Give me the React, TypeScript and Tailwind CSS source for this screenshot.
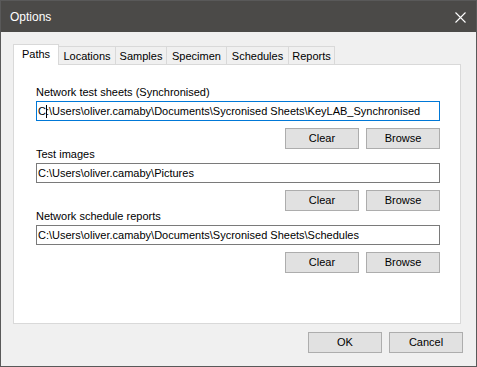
import type { ReactNode } from 'react';

const tabs = [
  { label: 'Paths', w: 'w-[46px]' },
  { label: 'Locations', w: 'w-[57px]' },
  { label: 'Samples', w: 'w-[51px]' },
  { label: 'Specimen', w: 'w-[60px]' },
  { label: 'Schedules', w: 'w-[62px]' },
  { label: 'Reports', w: 'w-[46px]' },
];

function WinButton({ children }: { children: ReactNode }) {
  return (
    <button
      type="button"
      className="flex h-[21px] w-[74px] items-center justify-center border border-[#adadad] bg-[#e1e1e1] text-[11px] leading-[13px] text-black"
    >
      {children}
    </button>
  );
}

function PathField({ label, value, focused, first }: { label: string; value: ReactNode; focused?: boolean; first?: boolean }) {
  return (
    <div className={`flex flex-col ${first ? '' : '-mt-px'}`}>
      <div className="h-[13px] leading-[13px] text-black">{label}</div>
      <div
        className={`mt-[2px] flex h-[20px] w-[404px] items-center border pl-px leading-[13px] whitespace-nowrap text-black ${focused ? 'border-[#0078d7]' : 'border-[#7a7a7a]'}`}
      >
        {value}
      </div>
      <div className="mt-[7px] flex w-[404px] justify-end gap-[7px]">
        <WinButton>Clear</WinButton>
        <WinButton>Browse</WinButton>
      </div>
    </div>
  );
}

export default function App() {
  return (
    <div className="flex h-[367px] w-[477px] flex-col border border-[#595959] bg-[#f0f0f0] font-['Liberation_Sans',Arial,sans-serif] text-[11px]">
      <div className="flex h-[31px] items-center justify-between bg-[#4b4a48] pl-[9px] pr-[10px]">
        <span className="text-[12px] text-white">Options</span>
        <svg width="11" height="11" viewBox="0 0 11 11" className="mt-px">
          <path d="M0.5 0.5 L10.5 10.5 M10.5 0.5 L0.5 10.5" stroke="#ffffff" strokeWidth="1.1" />
        </svg>
      </div>

      <div className="flex flex-col pl-[12px] pt-[12px]">
        <div className="flex h-[20px] items-end">
          {tabs.map((t, i) =>
            i === 0 ? (
              <div
                key={t.label}
                className={`relative z-10 -mb-px flex h-[21px] ${t.w} items-start justify-center border border-b-0 border-[#d9d9d9] bg-white pt-[3px] leading-[13px] text-black`}
              >
                {t.label}
              </div>
            ) : (
              <div
                key={t.label}
                className={`flex h-[18px] ${t.w} items-center justify-center border-t border-r border-[#d9d9d9] bg-[#f0f0f0] pt-px leading-[13px] text-black`}
              >
                {t.label}
              </div>
            )
          )}
        </div>

        <div className="flex h-[260px] w-[448px] flex-col border border-[#d9d9d9] bg-white pl-[22px] pt-[21px]">
          <PathField
            first
            focused
            label="Network test sheets (Synchronised)"
            value={
              <>
                C<span className="-mr-px inline-block h-[13px] w-px bg-black" />
                :\Users\oliver.camaby\Documents\Sycronised Sheets\KeyLAB_Synchronised
              </>
            }
          />
          <PathField label="Test images" value="C:\Users\oliver.camaby\Pictures" />
          <PathField
            label="Network schedule reports"
            value="C:\Users\oliver.camaby\Documents\Sycronised Sheets\Schedules"
          />
        </div>

        <div className="mt-[8px] flex justify-end gap-[7px] pr-[13px]">
          <WinButton>OK</WinButton>
          <WinButton>Cancel</WinButton>
        </div>
      </div>
    </div>
  );
}
